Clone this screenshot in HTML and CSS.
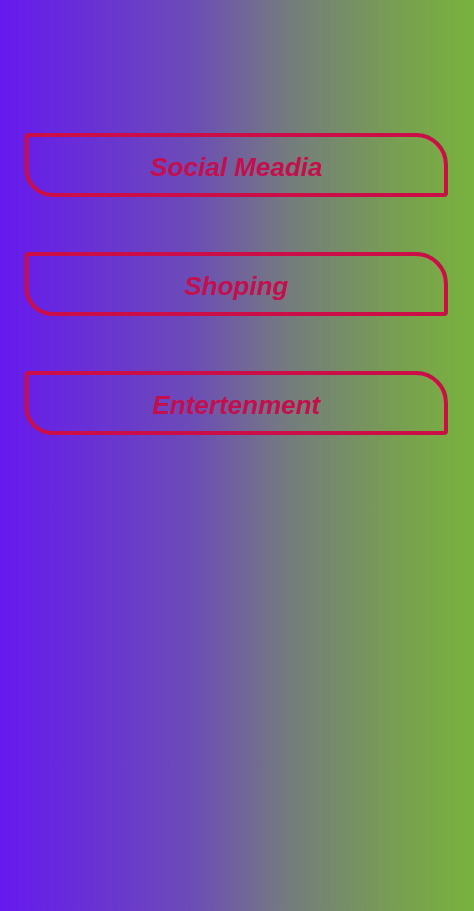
FILE: index.html
```html
<!DOCTYPE html>
<html>
<head>
<meta charset="utf-8">
<link rel="stylesheet" href="styles.css">
</head>
<body>
<div class="page">
  <div class="menu">
    <div class="item">Social Meadia</div>
    <div class="item">Shoping</div>
    <div class="item">Entertenment</div>
  </div>
</div>
</body>
</html>
```
FILE: styles.css
```css
html, body {
  margin: 0;
  padding: 0;
  height: 100%;
}
.page {
  min-height: 911px;
  box-sizing: border-box;
  background: linear-gradient(to right, #6619ef 0%, #6c4bb8 40%, #747a80 60%, #78a050 85%, #79b23d 100%);
  padding: 133px 26px 0 25px;
  font-family: "Liberation Sans", Arial, sans-serif;
}
.menu {
  display: flex;
  flex-direction: column;
  gap: 55px;
}
.item {
  height: 64px;
  box-sizing: border-box;
  border: 4px solid #cc0e48;
  border-radius: 4px 32px 4px 28px;
  display: flex;
  align-items: center;
  justify-content: center;
  color: #c40f4e;
  font-weight: 700;
  font-style: italic;
  font-size: 26px;
  padding-top: 4px;
}
```
